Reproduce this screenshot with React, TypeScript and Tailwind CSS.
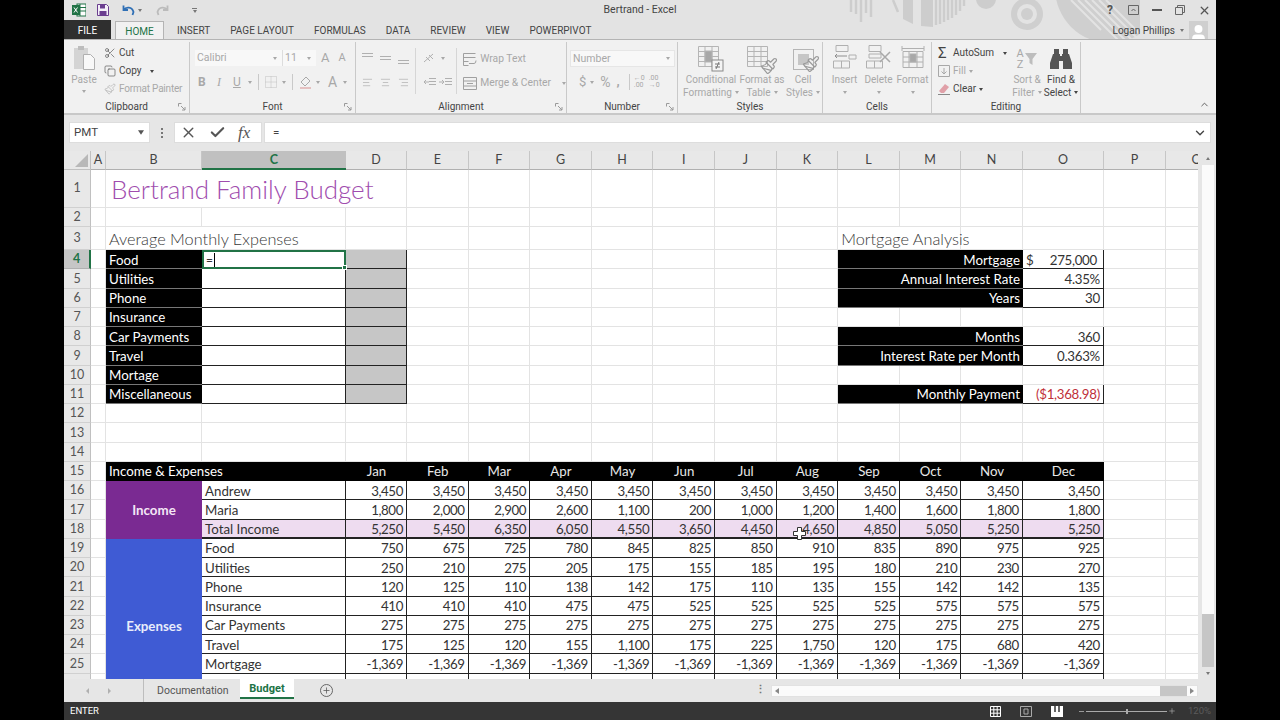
import { Scissors, Copy, Paintbrush, AlignLeft, AlignCenter, AlignRight, ChevronDown, ChevronUp, Check, X, Plus, User } from 'lucide-react';
import type { ReactNode } from 'react';

const columns = ['A', 'B', 'C', 'D', 'E', 'F', 'G', 'H', 'I', 'J', 'K', 'L', 'M', 'N', 'O', 'P', 'Q'];
const months = ['Jan', 'Feb', 'Mar', 'Apr', 'May', 'Jun', 'Jul', 'Aug', 'Sep', 'Oct', 'Nov', 'Dec'];
const tabs = ['INSERT', 'PAGE LAYOUT', 'FORMULAS', 'DATA', 'REVIEW', 'VIEW', 'POWERPIVOT'];

const averages = ['Food', 'Utilities', 'Phone', 'Insurance', 'Car Payments', 'Travel', 'Mortage', 'Miscellaneous'];

const mortgage: Record<number, { label: string; value: ReactNode; red?: boolean } | null> = {
  4: { label: 'Mortgage', value: <span className="flex justify-between pl-[3px] pr-[3px]"><span>$</span><span>275,000</span></span> },
  5: { label: 'Annual Interest Rate', value: '4.35%' },
  6: { label: 'Years', value: '30' },
  7: null,
  8: { label: 'Months', value: '360' },
  9: { label: 'Interest Rate per Month', value: '0.363%' },
  10: null,
  11: { label: 'Monthly Payment', value: '($1,368.98)', red: true },
};

const budget: { row: number; label: string; values: string[] }[] = [
  { row: 16, label: 'Andrew', values: Array(12).fill('3,450') },
  { row: 17, label: 'Maria', values: ['1,800', '2,000', '2,900', '2,600', '1,100', '200', '1,000', '1,200', '1,400', '1,600', '1,800', '1,800'] },
  { row: 18, label: 'Total Income', values: ['5,250', '5,450', '6,350', '6,050', '4,550', '3,650', '4,450', '4,650', '4,850', '5,050', '5,250', '5,250'] },
  { row: 19, label: 'Food', values: ['750', '675', '725', '780', '845', '825', '850', '910', '835', '890', '975', '925'] },
  { row: 20, label: 'Utilities', values: ['250', '210', '275', '205', '175', '155', '185', '195', '180', '210', '230', '270'] },
  { row: 21, label: 'Phone', values: ['120', '125', '110', '138', '142', '175', '110', '135', '155', '142', '142', '135'] },
  { row: 22, label: 'Insurance', values: ['410', '410', '410', '475', '475', '525', '525', '525', '525', '575', '575', '575'] },
  { row: 23, label: 'Car Payments', values: Array(12).fill('275') },
  { row: 24, label: 'Travel', values: ['175', '125', '120', '155', '1,100', '175', '225', '1,750', '120', '175', '680', '420'] },
  { row: 25, label: 'Mortgage', values: Array(12).fill('-1,369') },
];

const gridLine = 'border-r border-b border-[#e3e3e3]';
const cellLine = 'border-r border-b border-[#222222]';

function Blank({ count = 1 }: { count?: number }) {
  return (
    <>
      {Array.from({ length: count }).map((_, i) => (
        <div key={i} className={gridLine} />
      ))}
    </>
  );
}

function RowHead({ n, active }: { n?: number; active?: boolean }) {
  return (
    <div
      className={`flex items-center justify-center pt-px text-[12.5px] border-b ${
        active
          ? 'bg-[#c6c6c6] text-[#217346] font-bold border-r-2 border-r-[#217346] border-b-[#b0b0b0]'
          : 'bg-[#e8e8e8] text-[#555555] border-r border-r-[#c0c0c0] border-b-[#d0d0d0]'
      }`}
    >
      {n}
    </div>
  );
}

function Caret({ className = '' }: { className?: string }) {
  return <span className={`inline-block w-0 h-0 border-x-[2.5px] border-x-transparent border-t-[3px] border-t-current ${className}`} />;
}

function Group({ width, label, launcher, children }: { width: string; label: string; launcher?: boolean; children: ReactNode }) {
  return (
    <div className={`${width} shrink-0 flex flex-col border-r border-[#c9c9c9] mt-[2px] relative`}>
      <div className="flex-1 flex min-h-0">{children}</div>
      <div className="h-[13px] text-[10px] leading-[13px] text-center text-[#444444]">{label}</div>
      {launcher && (
        <svg className="absolute right-[3px] bottom-[2px]" width="8" height="8" viewBox="0 0 8 8" fill="none" stroke="#9a9a9a">
          <path d="M.5 .5h3M.5 .5v3M3 3l4 4M7 4v3H4" />
        </svg>
      )}
    </div>
  );
}

function Sheetish({ className = '' }: { className?: string }) {
  return (
    <svg className={className} width="30" height="26" viewBox="0 0 30 26" fill="none" stroke="#b5b5b5">
      <path d="M.5 .5h20v20h-20zM.5 5.500h20M.5 10.500h20M.5 15.500h20M7 .5v20M14 .5v20" />
    </svg>
  );
}

function BigButton({ lines, icon, dark, width }: { lines: string[]; icon: ReactNode; dark?: boolean; width: string }) {
  return (
    <div className={`${width} flex flex-col items-center text-[10px] leading-[13px] ${dark ? 'text-[#444444]' : 'text-[#a8a8a8]'}`}>
      <div className="h-[26px] mt-[4px] mb-[1px] flex items-center justify-center">{icon}</div>
      <div className="whitespace-nowrap">{lines[0]}</div>
      <div className="whitespace-nowrap flex items-center gap-[3px]">
        {lines[1]}
        <Caret />
      </div>
    </div>
  );
}

function TitleDecoration() {
  return (
    <svg className="absolute left-[776px] top-0" width="300" height="40" viewBox="0 0 300 40">
      <g stroke="#cdcdcd" strokeWidth="2.5">
        <path d="M11 0v12M16 0v14M21 0v22M26 0v13M31 0v17M53 0l5 12" />
        <path d="M96 0v25M100 0v24M104 0v22M108 0v20M112 0v18M116 0v15M120 0v11M124 0v6" />
      </g>
      <path d="M63 0h10v24l-10-5z" fill="#cdcdcd" />
      <path d="M81 0h12v27l-12 -1z" fill="#cdcdcd" />
      <circle cx="146" cy="-1" r="10" fill="#cdcdcd" />
      <circle cx="187" cy="14" r="16" fill="#cfcfcf" />
      <circle cx="187" cy="14" r="10" fill="#e3e3e3" />
      <circle cx="187" cy="14" r="6" fill="#cfcfcf" />
      <circle cx="270" cy="-12" r="55" fill="#cfcfcf" />
      <g stroke="#e3e3e3" strokeWidth="2">
        <path d="M238 0l40 40M245 0l40 40M252 0l40 40M259 0l40 40M266 0l40 40M231 0l30 30" />
      </g>
    </svg>
  );
}

function Ribbon() {
  return (
    <div className="h-[75px] shrink-0 bg-[#f1f1f1] border-b-2 border-[#c8c8c8] flex relative text-[#a8a8a8]">
      <Group width="w-[126px]" label="Clipboard" launcher>
        <div className="w-[40px] flex flex-col items-center text-[10px] leading-[13px] pt-[3px]">
          <svg width="26" height="26" viewBox="0 0 26 26">
            <rect x="3" y="3" width="14" height="21" fill="#d4d4d4" />
            <rect x="7" y="1" width="6" height="4" fill="#bdbdbd" />
            <path d="M12.500 9.500h7l4 4v11h-11z" fill="#f8f8f8" stroke="#b0b0b0" />
          </svg>
          <div className="mt-[2px]">Paste</div>
          <Caret className="mt-[4px]" />
        </div>
        <div className="flex flex-col text-[10px] leading-[18px] pt-[2px] whitespace-nowrap">
          <div className="flex items-center gap-[3px] text-[#444444]"><Scissors size={12} strokeWidth={1.2} /> Cut</div>
          <div className="flex items-center gap-[3px] text-[#444444]"><Copy size={12} strokeWidth={1.2} /> Copy <Caret className="ml-[5px]" /></div>
          <div className="flex items-center gap-[3px] tracking-[-0.2px]"><Paintbrush size={12} strokeWidth={1.2} /> Format Painter</div>
        </div>
      </Group>

      <Group width="w-[166px]" label="Font" launcher>
        <div className="flex flex-col pl-[5px] pt-[8px]">
          <div className="flex items-center h-[16px] text-[10.5px]">
            <div className="w-[87px] h-[16px] bg-[#f8f8f8] flex items-center justify-between px-[2px] pr-[5px]">Calibri <Caret /></div>
            <div className="w-[34px] h-[16px] bg-[#f8f8f8] border-l border-[#dddddd] flex items-center justify-between px-[2px] pr-[5px]">11 <Caret /></div>
            <span className="ml-[5px] text-[13px]">A</span>
            <span className="ml-[9px] text-[11px]">A</span>
          </div>
          <div className="flex items-center h-[18px] mt-[7px] text-[12px] pl-[3px]">
            <b className="w-[8px]">B</b>
            <i className="ml-[11px] w-[4px] [font-family:'Liberation_Serif',serif]">I</i>
            <span className="ml-[12px] w-[8px] underline">U</span>
            <Caret className="ml-[7px]" />
            <span className="ml-[6px] w-px h-[16px] bg-[#c9c9c9]" />
            <svg className="ml-[6px]" width="12" height="12" viewBox="0 0 12 12" fill="none" stroke="#c0c0c0"><path d="M.5 .5h11v11H.5zM6 .5v11M.5 6h11" strokeDasharray="1 1" /></svg>
            <Caret className="ml-[5px]" />
            <span className="ml-[6px] w-px h-[16px] bg-[#c9c9c9]" />
            <svg className="ml-[6px]" width="14" height="14" viewBox="0 0 14 14" fill="none" stroke="#a8a8a8"><path d="M2 7l5-5 4 4-5 5z" /><path d="M1 13h11" stroke="#e4c0c0" strokeWidth="2" /></svg>
            <Caret className="ml-[3px]" />
            <span className="ml-[8px] w-[9px] text-[14px]">A</span>
            <Caret className="ml-[6px]" />
          </div>
        </div>
      </Group>

      <Group width="w-[211px]" label="Alignment" launcher>
        <div className="flex flex-col pl-[6px] pt-[8px] w-[60px]">
          <div className="flex items-center gap-[7px] h-[16px]">
            <svg width="11" height="12" viewBox="0 0 11 12" stroke="#b0b0b0"><path d="M0 1.500h11M0 4.500h11" /></svg>
            <svg width="11" height="12" viewBox="0 0 11 12" stroke="#b0b0b0"><path d="M0 4.500h11M0 7.500h11" /></svg>
            <svg width="11" height="12" viewBox="0 0 11 12" stroke="#b0b0b0"><path d="M0 8.500h11M0 11.500h11" /></svg>
          </div>
          <div className="flex items-center gap-[7px] h-[16px] mt-[8px]">
            <AlignLeft size={11} strokeWidth={1.4} />
            <AlignCenter size={11} strokeWidth={1.4} />
            <AlignRight size={11} strokeWidth={1.4} />
          </div>
        </div>
        <div className="flex flex-col pl-[7px] pt-[2px] mt-[6px] w-[42px] h-[46px] border-l border-[#d6d6d6]">
          <div className="flex items-center gap-[4px] h-[16px]">
            <svg width="14" height="13" viewBox="0 0 14 13" fill="none" stroke="#b0b0b0"><path d="M1 10l9-8M3 5l4 4M6 3l4 4" /></svg>
            <Caret />
          </div>
          <div className="flex items-center gap-[3px] h-[16px] mt-[8px]">
            <svg width="13" height="11" viewBox="0 0 13 11" fill="none" stroke="#b0b0b0"><path d="M6 1.500h7M6 4.500h7M6 7.500h7M1 5h5M3 3L1 5l2 2" /></svg>
            <svg width="13" height="11" viewBox="0 0 13 11" fill="none" stroke="#b0b0b0"><path d="M6 1.500h7M6 4.500h7M6 7.500h7M0 5h5M3 3l2 2-2 2" /></svg>
          </div>
        </div>
        <div className="flex flex-col pl-[6px] pt-[3px] mt-[6px] h-[46px] border-l border-[#d6d6d6] text-[10.3px] whitespace-nowrap">
          <div className="flex items-center gap-[3px] h-[16px]">
            <svg width="14" height="13" viewBox="0 0 14 13" fill="none" stroke="#a0a0a0"><path d="M.5 .5h12M.5 4.500h12M.5 8.500h5M.5 12.500h5M.5 .5v12M6 10.500h5q2 0 2-3" /></svg>
            Wrap Text
          </div>
          <div className="flex items-center gap-[3px] h-[16px] mt-[8px]">
            <svg width="14" height="13" viewBox="0 0 14 13" fill="none" stroke="#a0a0a0"><path d="M.5 .5h13v12H.5zM.5 4h13M.5 9h13M4 6.500h6" /></svg>
            Merge &amp; Center <Caret className="ml-[8px]" />
          </div>
        </div>
      </Group>

      <Group width="w-[111px]" label="Number" launcher>
        <div className="flex flex-col pl-[3px] pt-[8px]">
          <div className="w-[105px] h-[17px] bg-[#f8f8f8] border border-[#e6e6e6] flex items-center justify-between pl-[2px] pr-[4px] text-[10.5px]">Number <Caret /></div>
          <div className="flex items-center mt-[7px] pl-[9px] text-[13px] h-[16px]">
            <span>$</span>
            <Caret className="ml-[4px]" />
            <span className="ml-[6px] text-[14px]">%</span>
            <span className="ml-[6px] font-bold">,</span>
            <span className="ml-[9px] w-px h-[16px] bg-[#c9c9c9]" />
            <span className="ml-[4px] text-[7px] leading-[7px] whitespace-nowrap">←0<br />.00</span>
            <span className="ml-[4px] text-[7px] leading-[7px] whitespace-nowrap">.00<br />→0</span>
          </div>
        </div>
      </Group>

      <Group width="w-[145px]" label="Styles">
        <div className="flex pl-[7px]">
          <BigButton width="w-[52px]" lines={['Conditional', 'Formatting']} icon={<svg width="26" height="26" viewBox="0 0 26 26" fill="none" stroke="#b5b5b5"><path d="M.5 .5h20v20H.5zM.5 5.500h20M.5 10.500h20M.5 15.500h20M7 .5v20M14 .5v20" /><rect x="7" y="5" width="7" height="11" fill="#a8a8a8" /><rect x="14" y="14" width="11" height="11" fill="#f4f4f4" stroke="#8a8a8a" /><path d="M17 18h5M17 21h5M21 16l-3 7" stroke="#777777" /></svg>} />
          <BigButton width="w-[50px]" lines={['Format as', 'Table']} icon={<div className="relative"><Sheetish /><Paintbrush className="absolute right-[-1px] bottom-[-3px] text-[#9a9a9a]" size={18} strokeWidth={1.6} /></div>} />
          <BigButton width="w-[32px]" lines={['Cell', 'Styles']} icon={<div className="relative"><div className="w-[21px] h-[21px] border border-[#b5b5b5] p-[4px]"><div className="w-full h-full bg-[#c6c6c6]" /></div><Paintbrush className="absolute right-[-6px] bottom-[-3px] text-[#9a9a9a]" size={18} strokeWidth={1.6} /></div>} />
        </div>
      </Group>

      <Group width="w-[109px]" label="Cells">
        <div className="flex pl-[5px] text-[10px] leading-[13px] gap-[1px]">
          {[
            { name: 'Insert', icon: <svg width="24" height="24" viewBox="0 0 24 24" fill="none" stroke="#b0b0b0"><path d="M3 .5h12v6H3zM.5 16h16v7H.5zM8.500 16v7M16 10h7v4h-7z" /><path d="M2 11h12M4 9l-2 2 2 2" stroke="#8f8f8f" /></svg> },
            { name: 'Delete', icon: <svg width="26" height="24" viewBox="0 0 26 24" fill="none" stroke="#b0b0b0"><path d="M3 .5h12v6H3zM.5 16h16v7H.5zM8.500 16v7M3 9h12v4H3z" /><path d="M14 7l10 10M24 7L14 17" stroke="#a8a8a8" strokeWidth="1.500" /></svg> },
            { name: 'Format', icon: <svg width="24" height="24" viewBox="0 0 24 24" fill="none" stroke="#b0b0b0"><path d="M1 3.500h22M1 1v5M23 1v5M2 6.500h20v16H2zM8 6.500v16M16 6.500v16M2 12h20M2 17h20" /><rect x="9" y="9" width="6" height="8" fill="#a8a8a8" /></svg> },
          ].map((b) => (
            <div key={b.name} className="w-[33px] flex flex-col items-center">
              <div className="h-[26px] mt-[2px] mb-[3px] flex items-center">{b.icon}</div>
              <div>{b.name}</div>
              <Caret className="mt-[5px]" />
            </div>
          ))}
        </div>
      </Group>

      <Group width="w-[149px]" label="Editing">
        <div className="flex flex-col pl-[6px] text-[10px] leading-[18px] pt-[2px] w-[76px]">
          <div className="flex items-center gap-[3px] text-[#444444] whitespace-nowrap"><span className="text-[15px] leading-[18px] w-[12px]">Σ</span> AutoSum <Caret className="ml-[6px]" /></div>
          <div className="flex items-center gap-[3px]">
            <svg width="12" height="12" viewBox="0 0 12 12" fill="none" stroke="#a8a8a8"><path d="M.5 .5h11v11H.5zM6 3v6M3.500 6.500L6 9l2.500-2.500" /></svg>
            Fill <Caret />
          </div>
          <div className="flex items-center gap-[3px] text-[#444444]">
            <svg width="12" height="12" viewBox="0 0 12 12"><path d="M1 8l6-7 4 3-5 6H3z" fill="#e0a0a8" /><path d="M0 11.500h12" stroke="#888888" /></svg>
            Clear <Caret />
          </div>
        </div>
        <div className="w-[38px] flex flex-col items-center text-[10px] leading-[13px]">
          <div className="h-[26px] mt-[4px] mb-[1px] flex items-center">
            <span className="text-[11px] leading-[11px] text-center">A<br />Z</span>
            <svg width="14" height="14" viewBox="0 0 12 14"><path d="M0 1h12L7.500 7v6l-3-2V7z" fill="#bdbdbd" /></svg>
          </div>
          <div className="whitespace-nowrap">Sort &amp;</div>
          <div className="whitespace-nowrap flex items-center gap-[3px]">Filter <Caret /></div>
        </div>
        <div className="w-[30px] flex flex-col items-center text-[10px] leading-[13px] text-[#444444]">
          <div className="h-[26px] mt-[4px] mb-[1px] flex items-center">
            <svg width="22" height="20" viewBox="0 0 22 20" fill="#555555">
              <rect x="4" y="0" width="5" height="5" /><rect x="13" y="0" width="5" height="5" />
              <path d="M3 5h7v2h2V5h7l3 9v6h-9v-8h-4v8H0v-6z" />
            </svg>
          </div>
          <div className="whitespace-nowrap">Find &amp;</div>
          <div className="whitespace-nowrap flex items-center gap-[3px]">Select <Caret /></div>
        </div>
      </Group>

      <ChevronUp className="absolute right-[6px] bottom-[3px] text-[#555555]" size={11} strokeWidth={2} />
    </div>
  );
}

function Sheet() {
  return (
    <div className="w-[1134px] h-[528px] shrink-0 overflow-hidden grid grid-cols-[27px_15px_96px_144px_61px_repeat(10,61.6px)_81px_62px_62px] grid-rows-[19px_37.5px_19.5px_23px_repeat(24,19.25px)] bg-white text-[13.3px] text-[#333333] relative [font-family:Lato,sans-serif]">
      {/* column headers */}
      <div className="bg-[#e8e8e8] border-r border-b border-[#c0c0c0] flex items-end justify-end p-[2px]">
        <div className="w-0 h-0 border-l-[13px] border-l-transparent border-b-[13px] border-b-[#b8b8b8]" />
      </div>
      {columns.map((c) => (
        <div
          key={c}
          className={`flex items-center justify-center pt-px text-[12.5px] ${
            c === 'C'
              ? 'bg-[#c0c0c0] text-[#217346] font-bold border-b-2 border-[#217346]'
              : 'bg-[#e8e8e8] text-[#444444] border-r border-r-[#c6c6c6] border-b border-b-[#b0b0b0]'
          }`}
        >
          {c}
        </div>
      ))}

      {/* title rows */}
      <RowHead n={1} />
      <Blank />
      <div className="col-span-3 border-r border-b border-[#e3e3e3] text-[26px] font-light text-[#a04cae] pl-[5px] flex items-end leading-[36px] whitespace-nowrap">Bertrand Family Budget</div>
      <Blank count={13} />
      <RowHead n={2} />
      <Blank count={17} />
      <RowHead n={3} />
      <Blank />
      <div className="col-span-2 border-r border-b border-[#e3e3e3] text-[16.3px] font-light text-[#383838] pl-[3px] pt-[3px] flex items-center whitespace-nowrap">Average Monthly Expenses</div>
      <Blank count={8} />
      <div className="col-span-2 border-r border-b border-[#e3e3e3] text-[16.3px] font-light text-[#383838] pl-[3px] pt-[3px] flex items-center whitespace-nowrap">Mortgage Analysis</div>
      <Blank count={4} />

      {/* expenses and mortgage blocks */}
      {averages.map((label, i) => {
        const row = i + 4;
        const m = mortgage[row];
        return (
          <div key={label} className="contents">
            <RowHead n={row} active={row === 4} />
            <Blank />
            <div className="bg-black text-white pl-[3px] pt-[3px] flex items-center border-b border-[#777777]">{label}</div>
            {row === 4 ? (
              <div className="border-2 border-[#217346] flex items-center pl-[2px] text-[12px] relative">
                =<span className="w-px h-[14px] bg-black ml-[1px]" />
                <div className="absolute -right-[3px] -bottom-[3px] w-[5px] h-[5px] bg-[#217346] border border-white" />
              </div>
            ) : (
              <div className={`${cellLine} bg-white`} />
            )}
            <div className={`${cellLine} bg-[#c6c6c6]`} />
            <Blank count={7} />
            {m ? (
              <>
                <div className="col-span-3 bg-black text-white text-right pr-[3px] pt-[3px] flex items-center justify-end border-b border-[#777777]">{m.label}</div>
                <div className={`${cellLine} bg-white flex items-center justify-end pr-[3px] pt-[3px] tracking-[-0.3px] ${m.red ? 'text-[#c0303a]' : ''}`}>
                  <div className="w-full text-right">{m.value}</div>
                </div>
              </>
            ) : (
              <Blank count={4} />
            )}
            <Blank count={2} />
          </div>
        );
      })}

      {[12, 13, 14].map((n) => (
        <div key={n} className="contents">
          <RowHead n={n} />
          <Blank count={17} />
        </div>
      ))}

      {/* income and expenses table */}
      <RowHead n={15} />
      <Blank />
      <div className="col-span-2 bg-black text-white pl-[3px] pt-px flex items-center">Income &amp; Expenses</div>
      {months.map((m) => (
        <div key={m} className="bg-black text-[#e8e8e8] flex items-center justify-center pt-px">{m}</div>
      ))}
      <Blank count={2} />

      {budget.map((b) => {
        const total = b.row === 18;
        return (
          <div key={b.row} className="contents">
            <RowHead n={b.row} />
            <Blank />
            {b.row === 16 && (
              <div className="row-span-3 bg-[#7a2a92] text-[#f4e6f6] font-bold pt-[2px] flex items-center justify-center">Income</div>
            )}
            {b.row === 19 && (
              <div className="row-span-9 bg-[#3f5bd4] text-[#e8ecfb] font-bold pt-[4px] flex items-center justify-center">Expenses</div>
            )}
            <div className={`pl-[3px] pt-[3px] flex items-center ${total ? 'bg-[#eedcf0] border-r border-[#222222] border-b-2' : cellLine}`}>{b.label}</div>
            {b.values.map((v, i) => (
              <div
                key={i}
                className={`flex items-center justify-end pr-[3px] pt-[3px] tracking-[-0.4px] ${total ? 'bg-[#eedcf0] border-r border-[#222222] border-b-2' : cellLine}`}
              >
                {v}
              </div>
            ))}
            <Blank count={2} />
          </div>
        );
      })}

      {[26, 27].map((n) => (
        <div key={n} className="contents">
          <RowHead />
          <Blank />
          {Array.from({ length: 13 }).map((_, i) => (
            <div key={i} className="border-r border-[#222222] bg-white" />
          ))}
          <Blank count={2} />
        </div>
      ))}

      {/* mouse pointer */}
      <svg className="absolute left-[729px] top-[376px]" width="13" height="13" viewBox="0 0 13 13">
        <path d="M4.500 .5h4v4h4v4h-4v4h-4v-4h-4v-4h4z" fill="#ffffff" stroke="#333333" />
      </svg>
    </div>
  );
}

export default function App() {
  return (
    <div className="w-[1280px] h-[720px] bg-black flex justify-center overflow-hidden [font-family:Roboto,sans-serif]">
      <div className="w-[1152px] h-full flex flex-col bg-[#e6e6e6]">
        {/* title bar and tabs */}
        <div className="h-[40px] shrink-0 bg-[#e3e3e3] relative border-b border-[#b4b4b4] overflow-hidden">
          <TitleDecoration />
          <div className="h-[20px] flex items-center relative">
            <div className="flex items-center pl-[8px] gap-[11px] w-[300px]">
              <svg width="14" height="14" viewBox="0 0 14 14">
                <rect x="5" y="1" width="9" height="12" fill="#ffffff" stroke="#217346" />
                <path d="M8 1v12M5 4.500h9M5 8h9" stroke="#217346" />
                <rect x="0" y="2" width="8" height="10" fill="#217346" />
                <path d="M2 4.500l3.500 5M5.500 4.500l-3.500 5" stroke="#ffffff" />
              </svg>
              <svg width="12" height="12" viewBox="0 0 12 12">
                <path d="M.5 .5h9l2 2v9H.5z" fill="#f4f0f8" stroke="#6a3d8f" />
                <rect x="3" y="1" width="5" height="3.500" fill="#6a3d8f" />
                <rect x="2.500" y="7" width="7" height="4.500" fill="#6a3d8f" />
              </svg>
              <div className="flex items-center gap-[3px] ml-[2px]">
                <svg width="13" height="13" viewBox="0 0 13 13" fill="none" stroke="#2f6fb5" strokeWidth="1.800">
                  <path d="M1.500 1.500v4.500h4.500M1.500 6C4 2.500 10 2.500 11.500 8l-1 3" />
                </svg>
                <Caret className="text-[#777777]" />
              </div>
              <div className="flex items-center gap-[3px] ml-[3px]">
                <svg width="13" height="13" viewBox="0 0 13 13" fill="none" stroke="#bbbbbb" strokeWidth="1.800">
                  <path d="M11.500 1.500v4.500h-4.500M11.500 6C9 2.500 3 2.500 1.500 8l1 3" />
                </svg>
              </div>
              <div className="flex flex-col items-center ml-[12px] gap-px">
                <span className="w-[5px] h-px bg-[#777777]" />
                <Caret className="text-[#777777]" />
              </div>
            </div>
            <div className="absolute left-0 right-0 text-center text-[10.5px] text-[#444444]">Bertrand - Excel</div>
            <div className="ml-auto flex items-center text-[#555555] pr-[5px] gap-[13px] relative">
              <span className="text-[12px] font-bold mr-[2px]">?</span>
              <svg width="11" height="10" viewBox="0 0 11 10" fill="none" stroke="#666666"><path d="M.5 .5h10v9H.5zM3.500 6l2-2 2 2" /></svg>
              <span className="w-[10px] h-[1.5px] bg-[#555555]" />
              <svg width="10" height="10" viewBox="0 0 10 10" fill="none" stroke="#666666"><path d="M.5 2.500h7v7h-7zM2.500 2.500v-2h7v7h-2" /></svg>
              <X size={13} strokeWidth={2.4} />
            </div>
          </div>
          <div className="h-[20px] flex items-end relative text-[10px]">
            <div className="w-[47px] h-[20px] bg-[#2f2f2f] text-white flex items-center justify-center">FILE</div>
            <div className="w-[49px] h-[20px] ml-[4px] bg-[#f1f1f1] border border-b-0 border-[#b4b4b4] text-[#217346] flex items-center justify-center relative top-px">HOME</div>
            <div className="flex items-center h-[20px] ml-[3px] text-[#444444]">
              {tabs.map((t) => (
                <div key={t} className="px-[10px] whitespace-nowrap">{t}</div>
              ))}
            </div>
            <div className="ml-auto flex items-center h-[20px] text-[#444444]">
              <span className="text-[10px]">Logan Phillips</span>
              <Caret className="ml-[5px] text-[#777777]" />
              <div className="w-[19px] h-[19px] ml-[5px] mr-[8px] bg-[#cfcfcf] flex items-end justify-center overflow-hidden">
                <User size={20} className="text-white fill-white -mb-[3px]" />
              </div>
            </div>
          </div>
        </div>

        <Ribbon />

        {/* formula bar */}
        <div className="h-[36px] shrink-0 pt-[7px] pb-[8px] flex items-stretch pl-[5px] pr-[5px] bg-[#e6e6e6]">
          <div className="w-[81px] bg-white border border-[#dddddd] flex items-center justify-between pl-[4px] pr-[6px] text-[11.5px] text-[#444444]">
            PMT <Caret className="text-[#555555] scale-150" />
          </div>
          <div className="w-[24px] flex flex-col items-center justify-center gap-[2px]">
            <span className="w-[2px] h-[2px] bg-[#777777]" />
            <span className="w-[2px] h-[2px] bg-[#777777]" />
            <span className="w-[2px] h-[2px] bg-[#777777]" />
          </div>
          <div className="w-[88px] bg-white border border-[#dddddd] flex items-center pl-[5px] gap-[12px] text-[#555555]">
            <X size={17} strokeWidth={2} />
            <Check size={17} strokeWidth={3} />
            <span className="italic text-[17px] leading-none [font-family:'Liberation_Serif',serif]">fx</span>
          </div>
          <div className="flex-1 ml-[2px] bg-white border border-[#dddddd] flex items-center justify-between pl-[8px] pr-[3px] text-[11.5px] text-[#444444]">
            =
            <ChevronDown size={14} strokeWidth={2.4} />
          </div>
        </div>

        {/* sheet and vertical scrollbar */}
        <div className="flex h-[528px] shrink-0 bg-[#e6e6e6]">
          <Sheet />
          <div className="flex-1 flex flex-col items-center pl-[4px] pr-[2px]">
            <div className="h-[14px] flex items-center"><Caret className="rotate-180 text-[#777777]" /></div>
            <div className="flex-1 w-full bg-[#fbfbfb] flex flex-col justify-end">
              <div className="h-[53px] bg-[#c6c6c6]" />
            </div>
            <div className="h-[12px] flex items-center"><Caret className="text-[#777777]" /></div>
          </div>
        </div>

        {/* sheet tabs */}
        <div className="h-[23px] shrink-0 flex items-start text-[10.5px] bg-[#e6e6e6] text-[#555555]">
          <div className="w-[80px] flex items-center pl-[22px] gap-[19px] h-full border-r border-[#bdbdbd] text-[#b0b0b0]">
            <span className="w-0 h-0 border-y-[3px] border-y-transparent border-r-[3px] border-r-current" />
            <span className="w-0 h-0 border-y-[3px] border-y-transparent border-l-[3px] border-l-current" />
          </div>
          <div className="w-[96px] h-full flex items-center pl-[13px] whitespace-nowrap">Documentation</div>
          <div className="h-[20px] w-[54px] pt-[3px] bg-white text-[11px] text-[#217346] font-bold border-b-2 border-[#217346] flex items-center justify-center">Budget</div>
          <div className="ml-[26px] mt-[5px] w-[13px] h-[13px] rounded-full border border-[#666666] flex items-center justify-center">
            <Plus size={9} strokeWidth={2} />
          </div>
          <div className="ml-auto h-full flex items-center w-[461px] pr-[18px]">
            <span className="text-[#777777] w-[16px] font-bold leading-none">⋮</span>
            <div className="flex-1 h-[12px] bg-[#fbfbfb] flex items-center justify-between border border-[#e2e2e2]">
              <span className="ml-[3px] w-0 h-0 border-y-[3px] border-y-transparent border-r-[4px] border-r-[#888888]" />
              <div className="flex items-center h-full">
                <div className="w-[27px] h-full bg-[#c6c6c6]" />
                <span className="mx-[3px] w-0 h-0 border-y-[3px] border-y-transparent border-l-[4px] border-l-[#888888]" />
              </div>
            </div>
          </div>
        </div>

        {/* status bar */}
        <div className="flex-1 bg-[#353535] flex items-center text-white text-[9.5px] pl-[6px]">
          ENTER
          <div className="ml-auto flex items-center pr-[5px]">
            <svg width="11" height="11" viewBox="0 0 11 11" fill="none" stroke="#ffffff"><path d="M.5 .5h10v10H.5zM3.800 .5v10M7.200 .5v10M.5 3.800h10M.5 7.200h10" /></svg>
            <svg className="ml-[19px]" width="12" height="11" viewBox="0 0 12 11" fill="none" stroke="#aaaaaa"><path d="M.5 .5h11v10H.5zM4 3h4v5H4z" /></svg>
            <svg className="ml-[19px]" width="12" height="11" viewBox="0 0 12 11"><rect width="12" height="11" fill="#ffffff" /><path d="M4 0v6M8 0v6" stroke="#353535" strokeWidth="1.500" /></svg>
            <span className="ml-[16px] w-[5px] h-px bg-[#999999]" />
            <div className="ml-[2px] w-[81px] h-px bg-[#aaaaaa] relative">
              <div className="absolute left-[40px] -top-[2px] w-[2px] h-[5px] bg-[#aaaaaa]" />
            </div>
            <Plus className="ml-[1px] text-[#aaaaaa]" size={8} strokeWidth={2} />
            <span className="ml-[12px] text-[#5c5c5c]">120%</span>
          </div>
        </div>
      </div>
    </div>
  );
}
